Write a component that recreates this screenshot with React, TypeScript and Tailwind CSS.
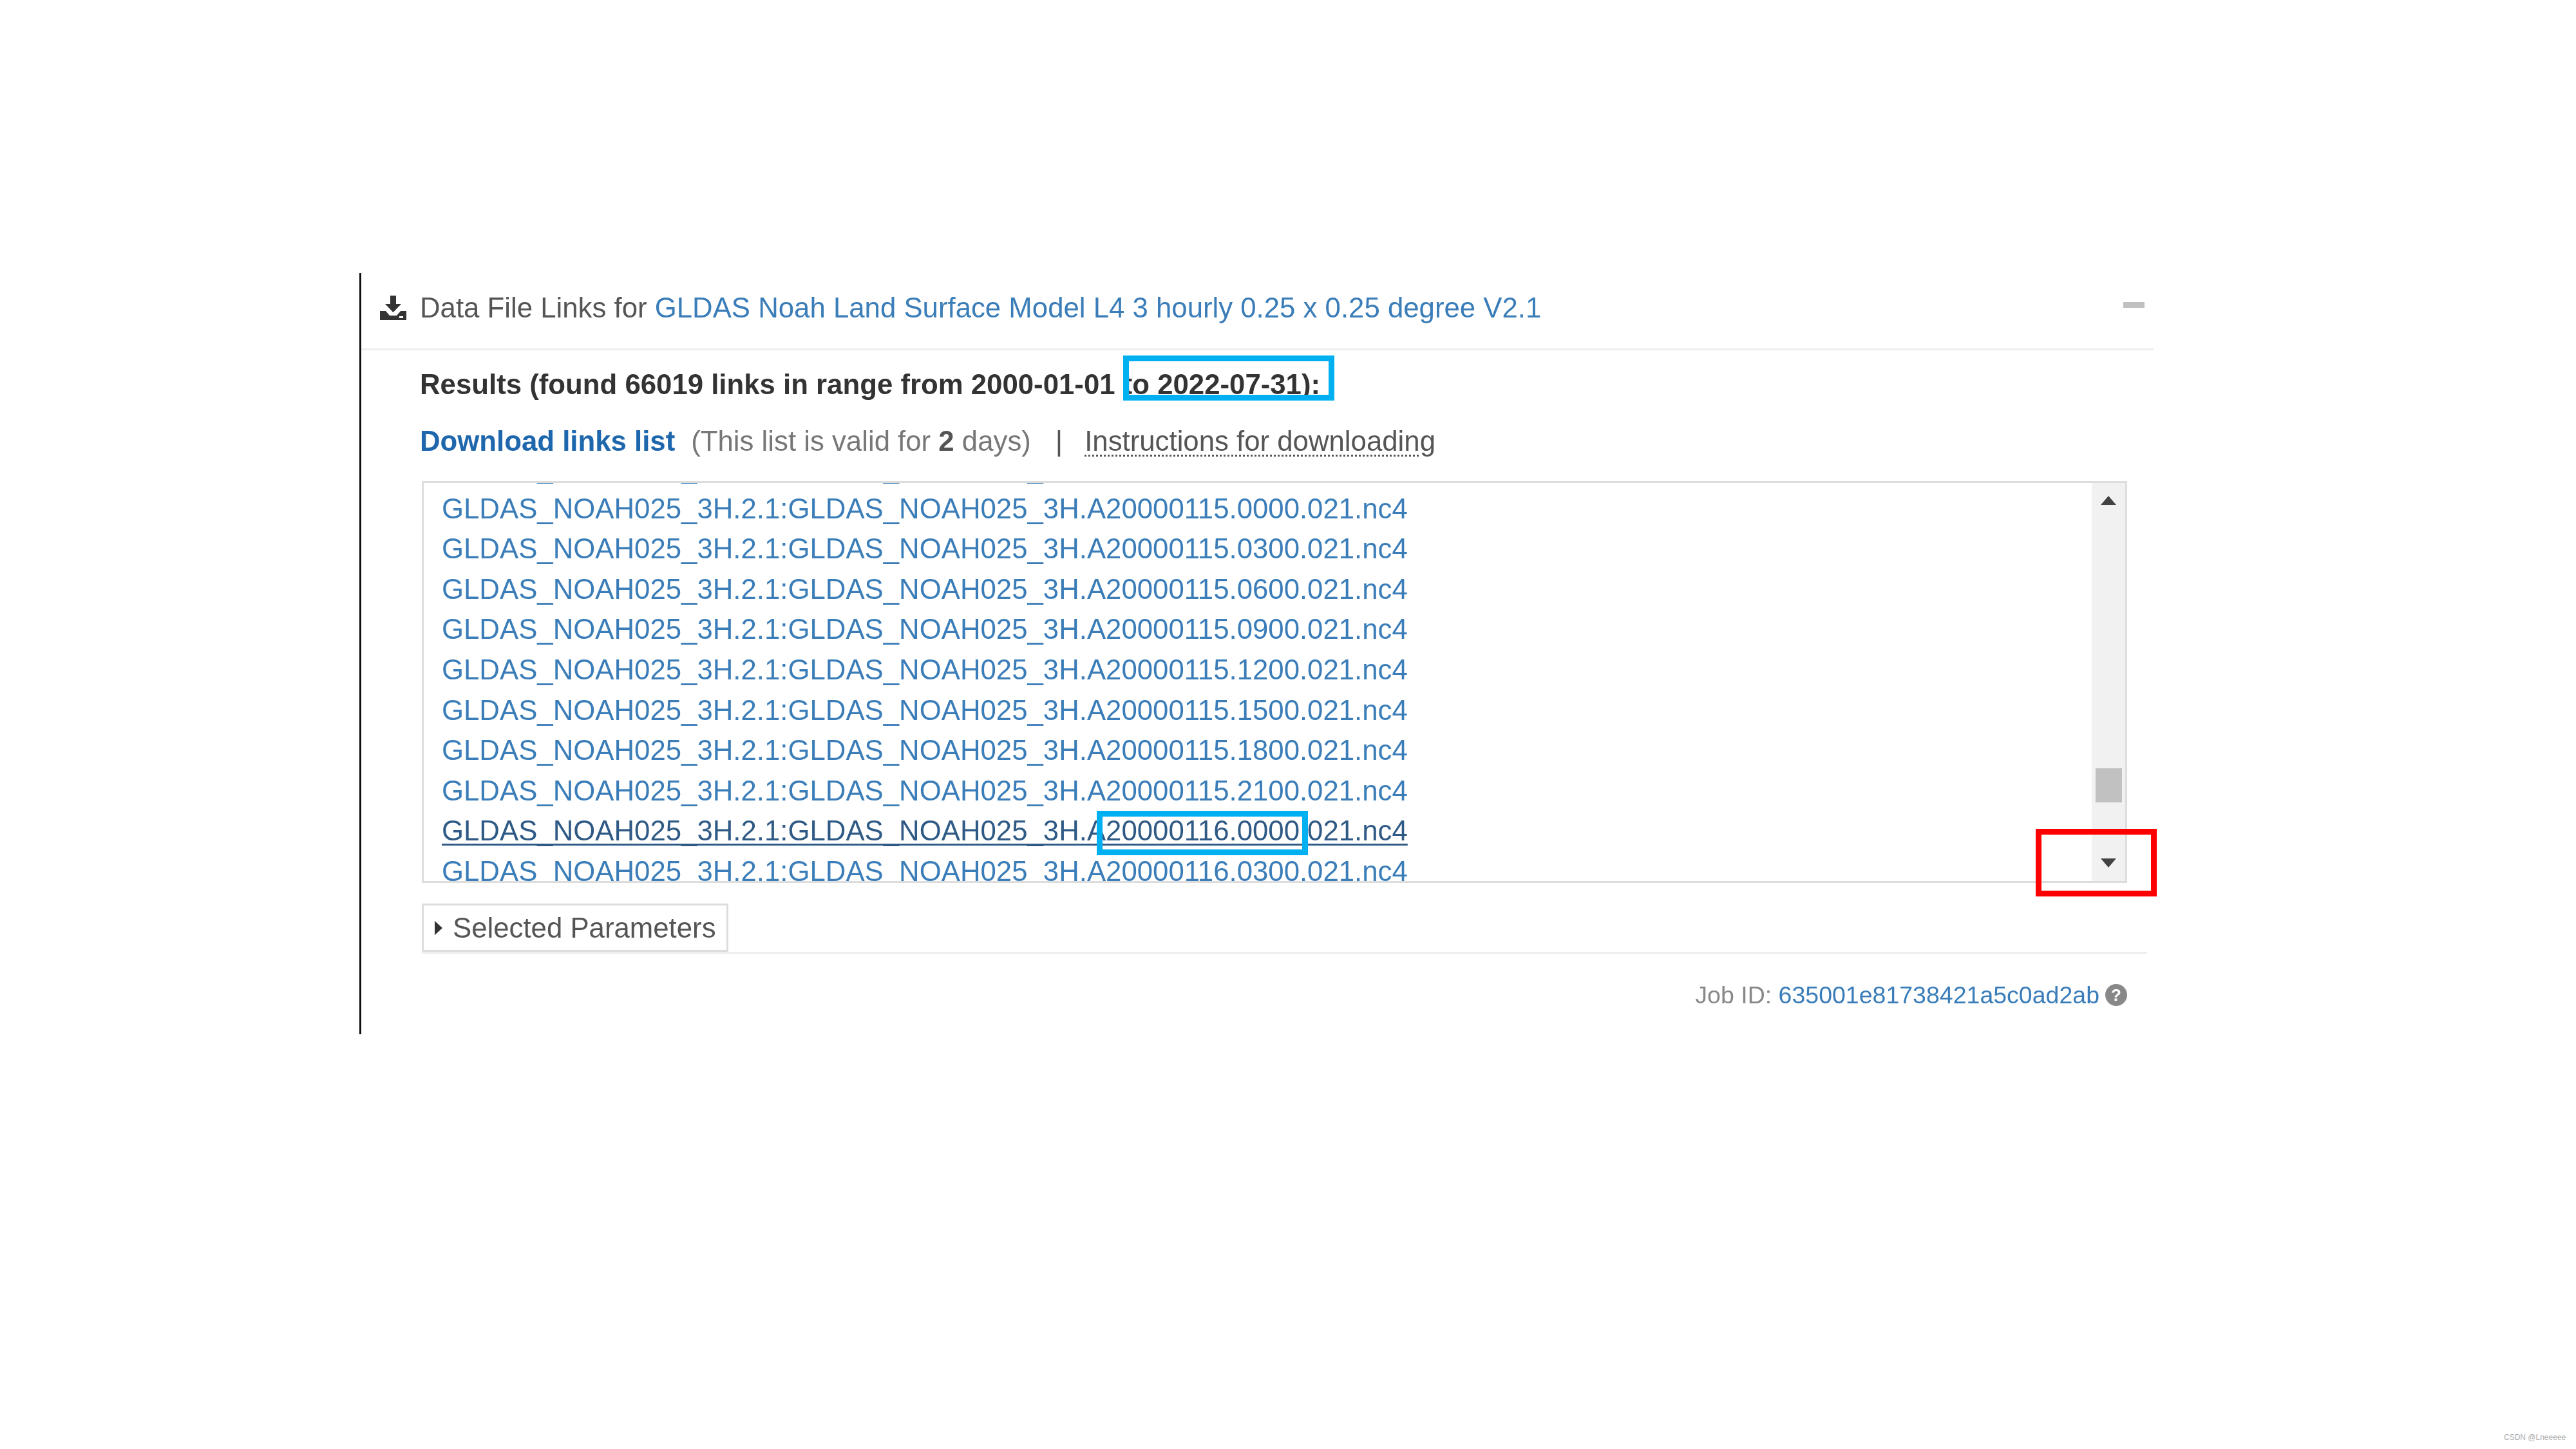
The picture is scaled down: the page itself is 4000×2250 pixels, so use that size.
const FONT = "font-['Liberation_Sans',Arial,sans-serif]";
const times = [
  "20000114.2100",
  "20000115.0000",
  "20000115.0300",
  "20000115.0600",
  "20000115.0900",
  "20000115.1200",
  "20000115.1500",
  "20000115.1800",
  "20000115.2100",
  "20000116.0000",
  "20000116.0300",
];

function SaveIcon() {
  return (
    <svg viewBox="0 0 41 38" className="w-[41px] h-[38px] shrink-0 fill-[#333]">
      <path d="M16 0h9v13h8L20.500 26 8 13h8z" />
      <path d="M0 24h9l6 7h11l6-7h9v14H0zM30 32h6v3h-6z" fillRule="evenodd" />
    </svg>
  );
}

function Row({ t }: { t: string }) {
  const hovered = t === "20000116.0000";
  return (
    <div
      className={`h-[62.6px] shrink-0 leading-[62.6px] whitespace-nowrap ${
        hovered ? "text-[#2f5a85]" : "text-[#3a7db8]"
      }`}
    >
      <a className={hovered ? "underline decoration-[3px] underline-offset-[5px]" : ""}>
        GLDAS_NOAH025_3H.2.1:GLDAS_NOAH025_3H.A{t}.021.nc4
      </a>
    </div>
  );
}

export default function App() {
  return (
    <div className={`relative w-[4000px] h-[2250px] bg-white overflow-hidden pt-[424px] pl-[558px] ${FONT}`}>
      <div className="w-[2786px] h-[1182px] border-l-[3px] border-[#111]">
        <div className="blur-[0.7px]">
          <div className="h-[120px] border-b-[3px] border-[#eee] flex items-center pl-[29px] pr-[14px] pb-[9px]">
            <SaveIcon />
            <div className="ml-[21px] text-[43.750px] text-[#555] whitespace-nowrap">
              Data File Links for <a className="text-[#3a7db8]">GLDAS Noah Land Surface Model L4 3 hourly 0.25 x 0.25 degree V2.1</a>
            </div>
            <div className="ml-auto mb-[10px] w-[33px] h-[9px] bg-[#c0c0c0]" />
          </div>

          <div className="pl-[94px]">
            <div className="-ml-[3px] mt-[23px] h-[60px] leading-[60px] text-[43.750px] font-bold text-[#333] whitespace-nowrap">
              Results (found 66019 links in range from 2000-01-01 to 2022-07-31):
            </div>
            <div className="-ml-[3px] mt-[28px] h-[60px] leading-[60px] text-[43.750px] text-[#777] whitespace-nowrap">
              <a className="font-bold text-[#1f67ad]">Download links list</a>
              <span className="ml-[25px]">(This list is valid for <b className="text-[#555]">2</b> days)</span>
              <span className="ml-[38px] text-[#555]">|</span>
              <a className="ml-[34px] text-[#555] underline decoration-dotted decoration-[3px] underline-offset-[6px]">Instructions for downloading</a>
            </div>

            <div className="mt-[32px] w-[2648px] h-[624px] border-[3px] border-[#ddd] flex text-[43.750px]">
              <div className="flex-1 overflow-hidden pl-[28px]">
                <div className="-mt-[54px]">
                  {times.map((t) => <Row key={t} t={t} />)}
                </div>
              </div>
              <div className="w-[52px] bg-[#f1f1f1] flex flex-col items-center pt-[20px] pb-[21px]">
                <div className="w-0 h-0 border-x-[12px] border-x-transparent border-b-[14px] border-b-[#424242]" />
                <div className="mt-[409px] ml-[1px] w-[41px] h-[53px] bg-[#c1c1c1]" />
                <div className="mt-auto w-0 h-0 border-x-[12px] border-x-transparent border-t-[14px] border-t-[#424242]" />
              </div>
            </div>

            <div className="mt-[32px] w-[2679px] h-[78px] border-b-[3px] border-[#eee]">
              <div className="w-[476px] h-[75px] border-[3px] border-[#ddd] flex items-center pl-[17px] text-[43.750px] text-[#555] whitespace-nowrap">
                <div className="w-0 h-0 border-y-[11px] border-y-transparent border-l-[12px] border-l-[#333]" />
                <span className="ml-[16px]">Selected Parameters</span>
              </div>
            </div>

            <div className="mt-[36px] w-[2648px] flex items-center justify-end text-[37.500px] text-[#888] whitespace-nowrap">
              Job ID:&nbsp;<a className="text-[#3a7db8]">635001e81738421a5c0ad2ab</a>
              <div className="ml-[9px] w-[34px] h-[34px] rounded-full bg-[#888] text-white font-bold text-[26px] leading-[34px] text-center">?</div>
            </div>
          </div>
        </div>
      </div>

      <div className="absolute left-[1744px] top-[552px] w-[328px] h-[70px] border-[9px] border-[#00b0f0]" />
      <div className="absolute left-[1703px] top-[1259px] w-[328px] h-[69px] border-[9px] border-[#00b0f0]" />
      <div className="absolute left-[3161px] top-[1287px] w-[188px] h-[105px] border-[9px] border-[#ff0000]" />
      <div className="absolute left-[3888px] top-[2224px] text-[12px] leading-[16px] text-[#aaa] whitespace-nowrap">CSDN @Lneeeee</div>
    </div>
  );
}
